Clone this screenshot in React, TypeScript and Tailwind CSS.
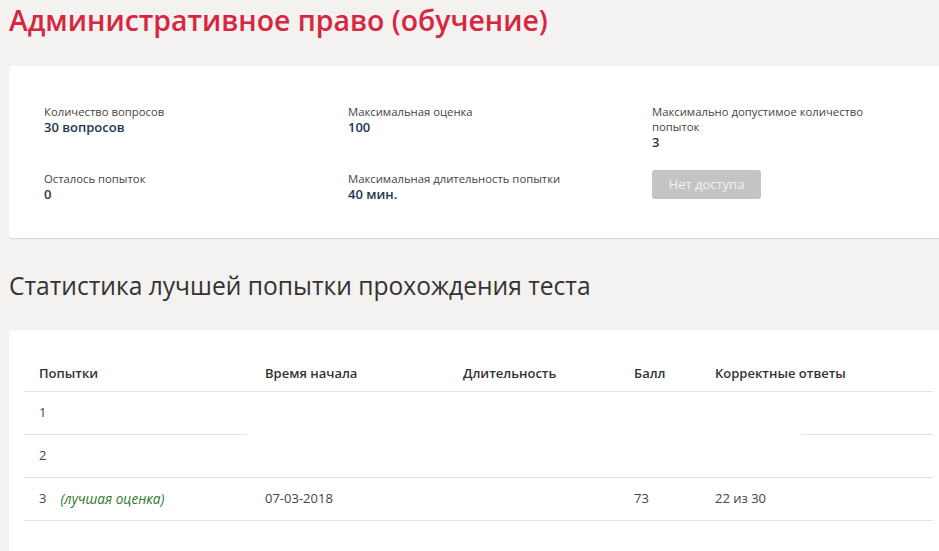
import React from 'react';

const font = { fontFamily: '"Open Sans", "Noto Sans", sans-serif' };

const InfoItem = ({ label, value }: { label: string; value: string }) => (
  <div>
    <p className="text-[11.3px] leading-[15px] text-[#444]">{label}</p>
    <p className="text-[13px] leading-[16px] font-semibold text-[#1f3550]">{value}</p>
  </div>
);

const cols = ['w-[226px]', 'w-[198px]', 'w-[171px]', 'w-[81px]', 'flex-1'];

export default function App() {
  return (
    <div className="min-h-[551px] w-[939px] overflow-hidden bg-[#f3f2f1] text-[#333]" style={font}>
      <h1 className="pl-[9px] pt-[1px] text-[28.4px] leading-[38px] font-semibold text-[#d7263f]">
        Административное право (обучение)
      </h1>

      <div className="ml-[9px] mt-[27px] h-[172px] w-[940px] rounded-[3px] bg-white pl-[35px] pt-[38px] shadow-[0_1px_1px_rgba(0,0,0,0.12)]">
        <div className="grid grid-cols-[304px_304px_230px] gap-y-[20px]">
          <InfoItem label="Количество вопросов" value="30 вопросов" />
          <InfoItem label="Максимальная оценка" value="100" />
          <InfoItem label="Максимально допустимое количество попыток" value="3" />
          <div className="pt-[1px]">
            <InfoItem label="Осталось попыток" value="0" />
          </div>
          <div className="pt-[1px]">
            <InfoItem label="Максимальная длительность попытки" value="40 мин." />
          </div>
          <div>
            <button className="h-[29px] w-[109px] rounded-[3px] bg-[#c4c4c4] text-[13px] text-[#f2f2f2]">
              Нет доступа
            </button>
          </div>
        </div>
      </div>

      <h2 className="pl-[9px] pt-[31px] text-[24.6px] leading-[34px] text-[#333]">
        Статистика лучшей попытки прохождения теста
      </h2>

      <div className="ml-[9px] mt-[27px] h-[240px] w-[940px] rounded-[3px] bg-white pl-[15px] pr-[16px] pt-[26px]">
        <div className="flex h-[36px] items-center border-b border-[#e2e2e2] text-[13px] font-semibold text-[#333]">
          {['Попытки', 'Время начала', 'Длительность', 'Балл', 'Корректные ответы'].map((h, i) => (
            <div key={h} className={`${cols[i]} pl-[15px]`}>
              {h}
            </div>
          ))}
        </div>
        <div className="flex h-[43px] text-[13px] text-[#444]">
          <div className="flex w-[223px] items-center border-b border-[#e2e2e2] pl-[15px]">1</div>
          <div className="flex-1" />
          <div className="w-[132px] border-b border-[#e2e2e2]" />
        </div>
        <div className="flex h-[43px] items-center border-b border-[#e2e2e2] pl-[15px] text-[13px] text-[#444]">
          2
        </div>
        <div className="flex h-[43px] items-center border-b border-[#e2e2e2] text-[13px] text-[#444]">
          <div className={`${cols[0]} flex items-center pl-[15px]`}>
            <span>3</span>
            <span className="ml-[14px] text-[13.6px] italic text-[#2d7a2d]">(лучшая оценка)</span>
          </div>
          <div className={`${cols[1]} pl-[15px]`}>07-03-2018</div>
          <div className={`${cols[2]} pl-[15px]`} />
          <div className={`${cols[3]} pl-[15px]`}>73</div>
          <div className={`${cols[4]} pl-[15px]`}>22 из 30</div>
        </div>
      </div>
    </div>
  );
}
